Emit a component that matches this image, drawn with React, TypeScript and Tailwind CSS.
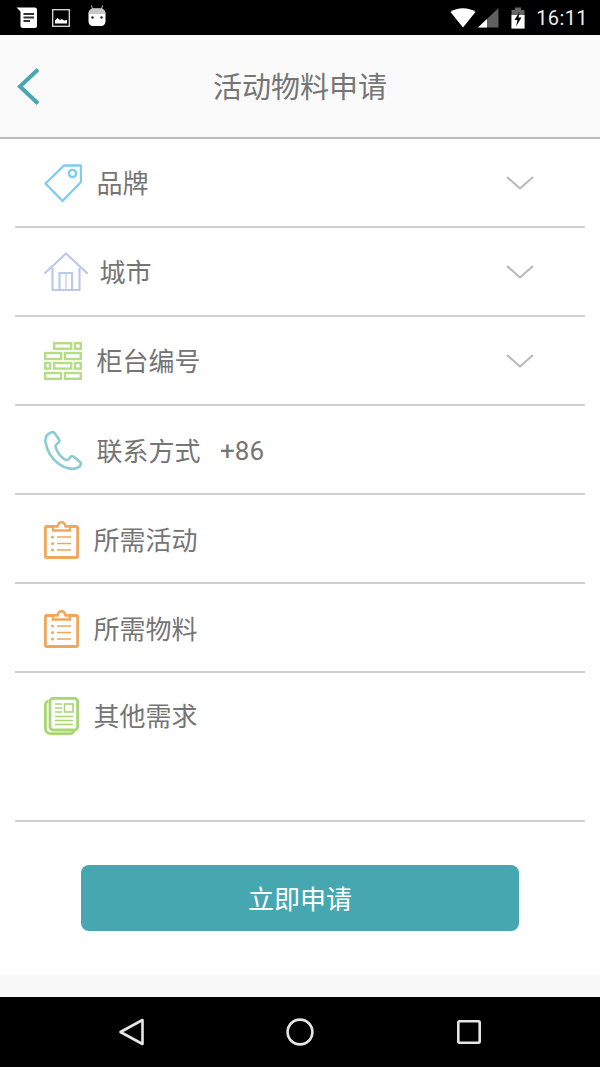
import type { ReactNode } from 'react'

const FONT = "font-['Noto_Sans_CJK_SC','Noto_Sans',sans-serif]"

function TagIcon() {
  return (
    <svg width="38" height="38" viewBox="0 0 38 38" fill="none" stroke="#7fcdee" strokeWidth="2.4">
      <path d="M1.5 19.5 L20 1.5 H37 V18 L18.5 37 Z" strokeLinejoin="round" />
      <circle cx="28.5" cy="9.5" r="3.6" />
    </svg>
  )
}

function HouseIcon() {
  return (
    <svg width="44" height="39" viewBox="0 0 44 39" fill="none" stroke="#bcc8ec" strokeWidth="2.2">
      <path d="M1 21 L22 1.5 L43 21" strokeLinecap="round" strokeLinejoin="round" />
      <path d="M8.5 16 V38 H35.5 V16" />
      <path d="M15.5 38 V21 H28 V38" />
      <path d="M22 21 V38" strokeWidth="1.2" />
    </svg>
  )
}

function BricksIcon() {
  return (
    <svg width="38" height="38" viewBox="0 0 38 38" fill="none" stroke="#b4dd85" strokeWidth="2.4">
      <rect x="10.2" y="1.2" width="17" height="5.6" />
      <rect x="31" y="1.2" width="5.8" height="5.6" />
      <rect x="1.2" y="11" width="16" height="6" />
      <rect x="21" y="11" width="15.8" height="6" />
      <rect x="1.2" y="21" width="5" height="5.6" />
      <rect x="10.2" y="21" width="17" height="5.6" />
      <rect x="31" y="21" width="5.8" height="5.6" />
      <rect x="1.2" y="31" width="15.8" height="5.8" />
      <rect x="21" y="31" width="15.8" height="5.8" />
    </svg>
  )
}

function PhoneIcon() {
  return (
    <svg width="38" height="39" viewBox="0 0 38 39" fill="none" stroke="#8accd2" strokeWidth="2.6" strokeLinejoin="round">
      <path d="M7 1.5 C3 3 1 6 1.5 11 C3 20 8 28 15 33 C21 37.5 29 39 34 36.5 C37 35 37.5 32.5 36 31 L30 26 C28.5 25 27 25 26 26.5 L24.5 28.5 C23 29.5 21.5 29 20 28 C15.5 24.5 12.5 20 11.5 15.5 C11.5 14 12.5 13 14 12 C15.5 11 15.5 9.5 15 8.5 L11 2.5 C10 1 8.5 1 7 1.5 Z" />
    </svg>
  )
}

function ClipboardIcon() {
  return (
    <svg width="35" height="38" viewBox="0 0 35 38" fill="none" stroke="#f0a75c" strokeWidth="2.4">
      <rect x="1.4" y="5.5" width="32.2" height="31" rx="1.5" strokeWidth="2.8" />
      <path d="M9 9.5 V5.5 H13.5 C14 3 15.5 1.2 17.5 1.2 C19.5 1.2 21 3 21.5 5.5 H26 V9.5 Z" fill="#fff" />
      <circle cx="8.5" cy="16" r="1.5" fill="#f0a75c" stroke="none" />
      <circle cx="8.5" cy="22.5" r="1.5" fill="#f0a75c" stroke="none" />
      <circle cx="8.5" cy="29" r="1.5" fill="#f0a75c" stroke="none" />
      <path d="M13 16 H27 M13 22.5 H27 M13 29 H27" strokeWidth="1.7" />
    </svg>
  )
}

function PaperIcon() {
  return (
    <svg width="35" height="38" viewBox="0 0 35 38" fill="none" stroke="#a8d672" strokeWidth="2.8">
      <path d="M4.5 4 C2.5 4.5 1.4 6 1.4 8 V31 C1.4 34.5 3.5 36.6 7 36.6 H26 C28 36.6 29.5 35.5 30 33.5" />
      <rect x="6" y="1.4" width="27.6" height="31.6" rx="3" />
      <path d="M11 7 H18 M11 11 H18 M11 15 H18 M11 19.5 H29 M11 23.5 H29 M11 27.5 H29" strokeWidth="1.6" />
      <rect x="20.5" y="7" width="8.5" height="8" strokeWidth="1.6" />
    </svg>
  )
}

function Chevron() {
  return (
    <svg width="28" height="14" viewBox="0 0 28 14" fill="none" stroke="#b8b8b8" strokeWidth="2">
      <path d="M1 1 L14 12.5 L27 1" />
    </svg>
  )
}

function StatusBar() {
  return (
    <div className="flex h-[35px] items-center justify-between bg-black pl-[16px] pr-[12px]">
      <div className="flex items-center">
        <svg width="22" height="22" viewBox="0 0 22 22">
          <path d="M0.5 0.5 H19 C20 0.5 21 1.5 21 2.5 V19 C21 20.3 20 21 19 21 H7 C5.5 21 4.5 20 4.5 19 V4.5 Z" fill="#fff" />
          <path d="M7.5 7 H18 M7.5 10.5 H18 M7.5 14 H14" stroke="#333" strokeWidth="2" />
        </svg>
        <svg className="ml-[14px]" width="18" height="18" viewBox="0 0 18 18">
          <rect x="0.7" y="0.7" width="16.6" height="16.6" fill="none" stroke="#ddd" strokeWidth="1.3" />
          <path d="M3 14.5 V11.5 L5.5 9 L8 11 L10 10 L12 11.5 L15 11 V14.5 Z" fill="#fff" />
        </svg>
        <svg className="mb-[4px] ml-[18px]" width="18" height="22" viewBox="0 0 18 22">
          <path d="M4.5 4.5 L3.5 0.5 M13.5 4.5 L14.5 0.5" stroke="#bbb" strokeWidth="1" />
          <path d="M0.5 9 C0.5 5.5 3 3.5 6 3.5 H12 C15 3.5 17.5 5.5 17.5 9 V16 C17.5 19 15.5 21 13 21 H5 C2.5 21 0.5 19 0.5 16 Z" fill="#fff" />
          <path d="M0.5 9 C0.5 5.5 3 3.5 6 3.5 H12 C15 3.5 17.5 5.5 17.5 9 H0.5 Z" fill="#c8c8c8" />
          <circle cx="4.5" cy="12.5" r="1.2" fill="#222" />
          <circle cx="13.5" cy="12.5" r="1.2" fill="#222" />
        </svg>
      </div>
      <div className="flex items-center">
        <svg width="26" height="20" viewBox="0 0 26 20">
          <path d="M0.5 4 C7 -1 19 -1 25.5 4 L13 19.5 Z" fill="#fff" />
        </svg>
        <svg className="ml-[2px]" width="21" height="20" viewBox="0 0 21 20">
          <path d="M0 19.5 L20.5 0 V19.5 Z" fill="#5f5f5f" />
          <path d="M0 19.5 L9 10.9 V19.5 Z" fill="#fff" />
        </svg>
        <svg className="ml-[12px]" width="14" height="22" viewBox="0 0 14 22">
          <path d="M0.5 3 H4 V0.5 H10 V3 H13.5 V21.5 H0.5 Z" fill="#666" />
          <path d="M0.5 8 H13.5 V21.5 H0.5 Z" fill="#fff" />
          <path d="M8.5 5 L3.5 13 H6.5 L5 19.5 L10.5 10.5 H7.5 Z" fill="#000" />
        </svg>
        <span className="ml-[11px] font-['Roboto',sans-serif] text-[20px] leading-none tracking-[0.4px] text-[#eeeeee]">16:11</span>
      </div>
    </div>
  )
}

function Row({ icon, label, gap = 'ml-[14.5px]', chevron = false, extra, inner = 'h-[87px]', tall = false }: { icon: ReactNode; label: string; gap?: string; chevron?: boolean; extra?: string; inner?: string; tall?: boolean }) {
  return (
    <div className={`mx-[15px] border-b-2 border-[#d0d0d0] ${tall ? 'h-[149px]' : 'h-[89px]'}`}>
      <div className={`flex ${inner} items-center pl-[29px] pr-[51px]`}>
        <div className="flex shrink-0">{icon}</div>
        <span className={`${gap} mb-[2px] text-[26px] leading-none text-[#757575]`}>{label}</span>
        {extra && <span className="ml-[19.5px] font-['Roboto',sans-serif] text-[26px] leading-none text-[#757575]">{extra}</span>}
        {chevron && (
          <div className="ml-auto flex">
            <Chevron />
          </div>
        )}
      </div>
    </div>
  )
}

export default function App() {
  return (
    <div className={`flex h-[1067px] w-[600px] flex-col overflow-hidden bg-white ${FONT}`}>
      <StatusBar />
      <header className="relative flex h-[104px] shrink-0 items-center justify-center border-b-2 border-[#bcbcbc] bg-[#fafafa]">
        <svg className="absolute left-[17px] top-[33px]" width="23" height="37" viewBox="0 0 23 37" fill="none" stroke="#45a7b1" strokeWidth="4">
          <path d="M21 1.5 L3 18.5 L21 35.5" />
        </svg>
        <h1 className="mb-[2px] text-[29px] font-normal leading-none text-[#757575]">活动物料申请</h1>
      </header>
      <Row icon={<TagIcon />} label="品牌" chevron />
      <Row icon={<HouseIcon />} label="城市" gap="ml-[11.5px]" chevron />
      <Row icon={<BricksIcon />} label="柜台编号" chevron />
      <Row icon={<PhoneIcon />} label="联系方式" extra="+86" inner="h-[87px] pt-[2px]" />
      <Row icon={<ClipboardIcon />} label="所需活动" inner="h-[87px] pt-[2px]" />
      <Row icon={<ClipboardIcon />} label="所需物料" inner="h-[87px] pt-[2px]" />
      <Row icon={<PaperIcon />} label="其他需求" inner="h-[85px]" tall />
      <div className="flex flex-1 flex-col">
        <button className="mx-[81px] mt-[43px] flex h-[66px] items-center justify-center rounded-[8px] bg-[#47a7b1] pb-[2px] text-[26px] text-white">
          立即申请
        </button>
        <div className="mt-auto h-[22px] bg-[#f8f8f8]" />
      </div>
      <nav className="relative flex h-[70px] shrink-0 items-center bg-black">
        <svg className="ml-[119px]" width="26" height="28" viewBox="0 0 26 28" fill="none" stroke="#e6e6e6" strokeWidth="2.6" strokeLinejoin="round">
          <path d="M23.5 2 V26 L1.5 14 Z" />
        </svg>
        <svg className="ml-[141px]" width="28" height="28" viewBox="0 0 28 28" fill="none" stroke="#e6e6e6" strokeWidth="2.6">
          <circle cx="14" cy="14" r="12.4" />
        </svg>
        <svg className="ml-[143px]" width="24" height="24" viewBox="0 0 24 24" fill="none" stroke="#e6e6e6" strokeWidth="2.6" strokeLinejoin="round">
          <rect x="1.3" y="1.3" width="21.4" height="21.4" rx="1" />
        </svg>
      </nav>
    </div>
  )
}
